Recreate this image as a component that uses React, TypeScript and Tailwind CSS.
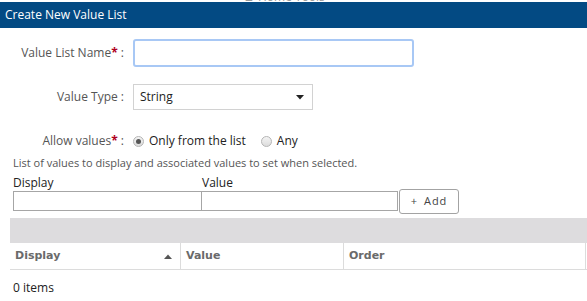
import React from 'react';

const font = "font-['Open_Sans',sans-serif]";

export default function App() {
  return (
    <div className={`w-[587px] h-[301px] bg-white overflow-hidden ${font} text-[#333]`}>
      {/* Clipped tooltip remnant above the dialog */}
      <div className="h-[2px] overflow-hidden pl-[243px]">
        <div className="-mt-[9px] text-[12px] leading-[12px] text-[#9a9a9a]">▲ Home Tools</div>
      </div>

      {/* Title bar */}
      <div className="h-[26px] bg-[#034a83] flex items-center pl-[5px] text-white text-[12px]">
        Create New Value List
      </div>

      {/* Form */}
      <div className="flex flex-col">
        <div className="flex items-center mt-[11px] h-[28px]">
          <div className="w-[124px] text-right text-[12px] text-[#555]">
            Value List Name<span className="text-[#b0001e] font-bold">*</span> :
          </div>
          <input
            className="ml-[9px] w-[281px] h-[28px] border-2 border-[#a8c8f5] rounded-[3px] outline-none px-2 text-[12px]"
            defaultValue=""
          />
        </div>

        <div className="flex items-center mt-[17px] h-[26px]">
          <div className="w-[124px] text-right text-[12px] text-[#555]">Value Type :</div>
          <div className="ml-[9px] w-[180px] h-[26px] border border-[#d2d2d2] flex items-center justify-between pl-[6px] pr-[8px] text-[12px] text-[#222]">
            <span>String</span>
            <svg width="8" height="5" viewBox="0 0 8 5">
              <path d="M0 0h8L4 4.5z" fill="#222" />
            </svg>
          </div>
        </div>

        <div className="flex items-center mt-[23px] h-[16px] text-[12px]">
          <div className="w-[124px] text-right text-[#555]">
            Allow values<span className="text-[#b0001e] font-bold">*</span> :
          </div>
          <span className="ml-[9px] w-[11px] h-[11px] rounded-full border border-[#b5b5b5] bg-gradient-to-b from-[#f4f4f4] to-[#dcdcdc] flex items-center justify-center">
            <span className="w-[5px] h-[5px] rounded-full bg-[#555]" />
          </span>
          <span className="ml-[5px] text-[#222]">Only from the list</span>
          <span className="ml-[15px] w-[11px] h-[11px] rounded-full border border-[#b5b5b5] bg-gradient-to-b from-[#f4f4f4] to-[#dcdcdc]" />
          <span className="ml-[5px] text-[#222]">Any</span>
        </div>

        <div className="mt-[6px] pl-[13px] h-[16px] flex items-center text-[11px] text-[#555]">
          List of values to display and associated values to set when selected.
        </div>

        <div className="flex pl-[13px] mt-[4px] h-[15px] items-center text-[12px] text-[#222]">
          <span className="w-[189px]">Display</span>
          <span>Value</span>
        </div>

        <div className="flex items-center pl-[13px] mt-[-2px] h-[26px]">
          <input className="w-[189px] h-[20px] border border-[#a6a6a6] outline-none" defaultValue="" />
          <input className="w-[196px] h-[20px] border border-l-0 border-[#a6a6a6] outline-none" defaultValue="" />
          <button className="ml-[1px] w-[60px] h-[25px] border border-[#a3a3a3] rounded-[3px] bg-white text-[11px] text-[#444] tracking-[1px] flex items-center justify-center gap-[6px]">
            <span>+</span>
            <span>Add</span>
          </button>
        </div>

        {/* Grid */}
        <div className="ml-[10px] mt-[4px] h-[25px] bg-[#dddcde]" />
        <div className="ml-[10px] h-[27px] flex border-b border-[#dcdcdc] text-[11px] font-bold text-[#6a6a6a] font-['DejaVu_Sans',sans-serif]">
          <div className="w-[171px] border-r border-[#dcdcdc] flex items-center justify-between pl-[5px] pr-[8px]">
            <span>Display</span>
            <svg width="8" height="5" viewBox="0 0 8 5">
              <path d="M0 5h8L4 0.5z" fill="#555" />
            </svg>
          </div>
          <div className="w-[163px] border-r border-[#dcdcdc] flex items-center pl-[5px]">Value</div>
          <div className="w-[242px] border-r border-[#dcdcdc] flex items-center pl-[5px]">Order</div>
        </div>

        <div className="pl-[13px] mt-[9px] text-[12px] text-[#222]">0 items</div>
      </div>
    </div>
  );
}
